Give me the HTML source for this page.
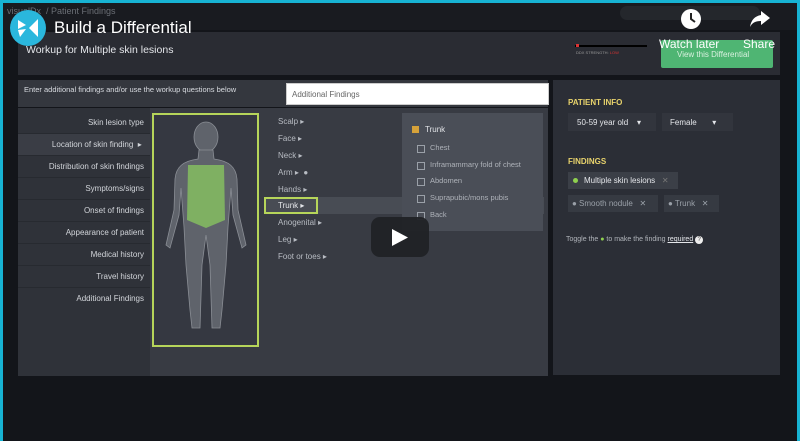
<!DOCTYPE html>
<html><head><meta charset="utf-8"><style>
*{margin:0;padding:0;box-sizing:border-box}
body{width:800px;height:441px;overflow:hidden;background:#13151a;font-family:"Liberation Sans",sans-serif;position:relative}
.frame{position:absolute;left:0;top:0;width:800px;height:441px;border:3px solid #17b3d3;border-bottom:none}
.a{position:absolute}
.t{position:absolute;color:#d8dbe0;font-size:8px;white-space:nowrap}
.nav{position:absolute;left:18px;width:132px;height:22px;border-bottom:1px solid #272a30;text-align:right;padding-right:6px;font-size:8px;color:#d2d5da;line-height:22px}
.m{position:absolute;left:278px;font-size:8px;color:#b8bcc3}
.sb{position:absolute;left:430px;font-size:7.5px;color:#aeb2b9;white-space:nowrap}
.sb:before{content:"";position:absolute;left:-13px;top:2px;width:6px;height:6px;border:1px solid #9aa0a8}
</style></head><body>
<div class="a" style="left:3px;top:3px;width:794px;height:27px;background:#191b20"></div>
<div class="a" style="left:620px;top:6px;width:140px;height:14px;border-radius:8px;background:#24272c"></div>
<div class="t" style="left:7px;top:6px;color:#6b6f76;font-size:9px">visualDx &nbsp;/ Patient Findings</div>
<div class="a" style="left:18px;top:32px;width:762px;height:43px;background:#2a2c33"></div>
<div class="a" style="left:10px;top:10px;width:36px;height:36px;border-radius:50%;background:#2ab7dd"></div>
<svg class="a" style="left:17px;top:17px" width="22" height="22" viewBox="0 0 22 22"><path d="M1 3 L9 8 L1 12Z M1 13 L9 12 L3 20Z M21 2 L12 11 L21 20Z" fill="#fff"/></svg>
<div class="t" style="left:54px;top:18px;font-size:17px;color:#fff">Build a Differential</div>
<div class="t" style="left:26px;top:44px;font-size:10.5px;color:#e4e6ea">Workup for Multiple skin lesions</div>
<div class="a" style="left:575px;top:45px;width:72px;height:2px;background:#000"></div>
<div class="a" style="left:576px;top:44px;width:3px;height:3px;background:#d33"></div>
<div class="t" style="left:576px;top:50px;font-size:4px;color:#999">DDX STRENGTH: <span style="color:#d33">LOW</span></div>
<div class="a" style="left:661px;top:40px;width:112px;height:28px;background:#4fb573;border-radius:2px"></div>
<div class="t" style="left:677px;top:50px;font-size:8px;color:#d9f0df">View this Differential</div>
<div class="a" style="left:681px;top:9px;width:20px;height:20px;border-radius:50%;background:#fff"></div>
<svg class="a" style="left:681px;top:9px" width="20" height="20"><path d="M10 4V10L14 13" stroke="#222" stroke-width="2" fill="none"/></svg>
<svg class="a" style="left:749px;top:9px" width="22" height="20"><path d="M12 2L21 9L12 16V12C6 12 3 14 1 18C2 11 6 7 12 6Z" fill="#fff"/></svg>
<div class="t" style="left:659px;top:37px;font-size:12px;color:#fff">Watch later</div>
<div class="t" style="left:743px;top:37px;font-size:12px;color:#fff">Share</div>
<div class="a" style="left:18px;top:80px;width:530px;height:27px;background:#34373e"></div>
<div class="t" style="left:24px;top:85px;font-size:7.5px;color:#d8dbe0">Enter additional findings and/or use the workup questions below</div>
<div class="a" style="left:286px;top:83px;width:263px;height:22px;background:#fff;border:1px solid #ccc"></div>
<div class="t" style="left:292px;top:90px;color:#666">Additional Findings</div>
<div class="a" style="left:18px;top:108px;width:530px;height:268px;background:#383b43"></div>
<div class="a" style="left:18px;top:108px;width:132px;height:268px;background:#2f3239"></div>
<div class="nav" style="top:112px">Skin lesion type</div>
<div class="nav" style="top:134px;background:#3a3d45">Location of skin finding &nbsp;▸&nbsp;</div>
<div class="nav" style="top:156px">Distribution of skin findings</div>
<div class="nav" style="top:178px">Symptoms/signs</div>
<div class="nav" style="top:200px">Onset of findings</div>
<div class="nav" style="top:222px">Appearance of patient</div>
<div class="nav" style="top:244px">Medical history</div>
<div class="nav" style="top:266px">Travel history</div>
<div class="nav" style="top:288px;border:none">Additional Findings</div>
<div class="a" style="left:152px;top:113px;width:107px;height:234px;border:2px solid #b6d55a;background:#353841"></div>
<svg class="a" style="left:154px;top:115px" width="103" height="230" viewBox="0 0 103 230">
<g fill="#5f636b" stroke="#8a8e95" stroke-width="0.8">
<ellipse cx="52" cy="22" rx="12" ry="15"/>
<path d="M45 35 L59 35 L60 44 C75 46 82 52 83 64 L84 95 L92 130 L88 133 L79 100 L77 73 L74 112 L72 150 L68 195 L66 213 L58 213 L56 150 L52 120 L48 150 L46 213 L38 213 L36 195 L32 150 L30 112 L27 73 L25 100 L16 133 L12 130 L20 95 L21 64 C22 52 29 46 44 44Z"/>
</g>
<path d="M34 50 L70 50 L71 105 L52 113 L33 105Z" fill="#7fb062"/>
</svg>
<div class="m" style="top:117px">Scalp ▸</div>
<div class="m" style="top:134px">Face ▸</div>
<div class="m" style="top:151px">Neck ▸</div>
<div class="m" style="top:168px">Arm ▸ &nbsp;●</div>
<div class="m" style="top:185px">Hands ▸</div>
<div class="a" style="left:264px;top:197px;width:280px;height:17px;background:#484c54"></div>
<div class="a" style="left:264px;top:197px;width:54px;height:17px;border:2px solid #b6d55a"></div>
<div class="m" style="top:201px;color:#e4e6ea">Trunk ▸</div>
<div class="m" style="top:218px">Anogenital ▸</div>
<div class="m" style="top:235px">Leg ▸</div>
<div class="m" style="top:252px">Foot or toes ▸</div>
<div class="a" style="left:402px;top:113px;width:141px;height:118px;background:#4a4e57"></div>
<div class="a" style="left:412px;top:126px;width:7px;height:7px;background:#d6a23a"></div>
<div class="t" style="left:425px;top:125px;color:#e0e2e6">Trunk</div>
<div class="sb" style="top:143px">Chest</div>
<div class="sb" style="top:160px">Inframammary fold of chest</div>
<div class="sb" style="top:176px">Abdomen</div>
<div class="sb" style="top:193px">Suprapubic/mons pubis</div>
<div class="sb" style="top:210px">Back</div>
<div class="a" style="left:371px;top:217px;width:58px;height:40px;background:#202226;border-radius:9px;opacity:.95"></div>
<svg class="a" style="left:392px;top:229px" width="18" height="17"><path d="M0 0L16 8.5L0 17Z" fill="#fff"/></svg>
<div class="a" style="left:553px;top:80px;width:227px;height:295px;background:#2b2e36"></div>
<div class="t" style="left:568px;top:98px;color:#e8d36c;font-weight:bold">PATIENT INFO</div>
<div class="a" style="left:568px;top:113px;width:88px;height:18px;background:#32353d"></div>
<div class="t" style="left:577px;top:118px;color:#e4e6ea">50-59 year old &nbsp;&nbsp;&nbsp;▾</div>
<div class="a" style="left:662px;top:113px;width:71px;height:18px;background:#32353d"></div>
<div class="t" style="left:670px;top:118px;color:#e4e6ea">Female &nbsp;&nbsp;&nbsp;&nbsp;&nbsp;&nbsp;▾</div>
<div class="t" style="left:568px;top:157px;color:#e8d36c;font-weight:bold">FINDINGS</div>
<div class="a" style="left:568px;top:172px;width:110px;height:17px;background:#3b3f47"></div>
<div class="a" style="left:573px;top:178px;width:5px;height:5px;border-radius:50%;background:#8fd14f"></div>
<div class="t" style="left:584px;top:176px;color:#e4e6ea">Multiple skin lesions &nbsp;&nbsp;<span style="color:#777">✕</span></div>
<div class="a" style="left:568px;top:195px;width:90px;height:17px;background:#363a42"></div>
<div class="t" style="left:572px;top:199px;color:#9aa0a8">● Smooth nodule &nbsp;&nbsp;✕</div>
<div class="a" style="left:664px;top:195px;width:55px;height:17px;background:#363a42"></div>
<div class="t" style="left:668px;top:199px;color:#9aa0a8">● Trunk &nbsp;&nbsp;✕</div>
<div class="t" style="left:566px;top:236px;font-size:7px;color:#b0b4ba">Toggle the <span style="color:#8fd14f">●</span> to make the finding <u style="color:#e4e6ea">required</u> <span style="display:inline-block;width:8px;height:8px;border-radius:50%;background:#eee;color:#333;font-size:6px;text-align:center;line-height:8px">?</span></div>
<div class="frame"></div>
</body></html>
